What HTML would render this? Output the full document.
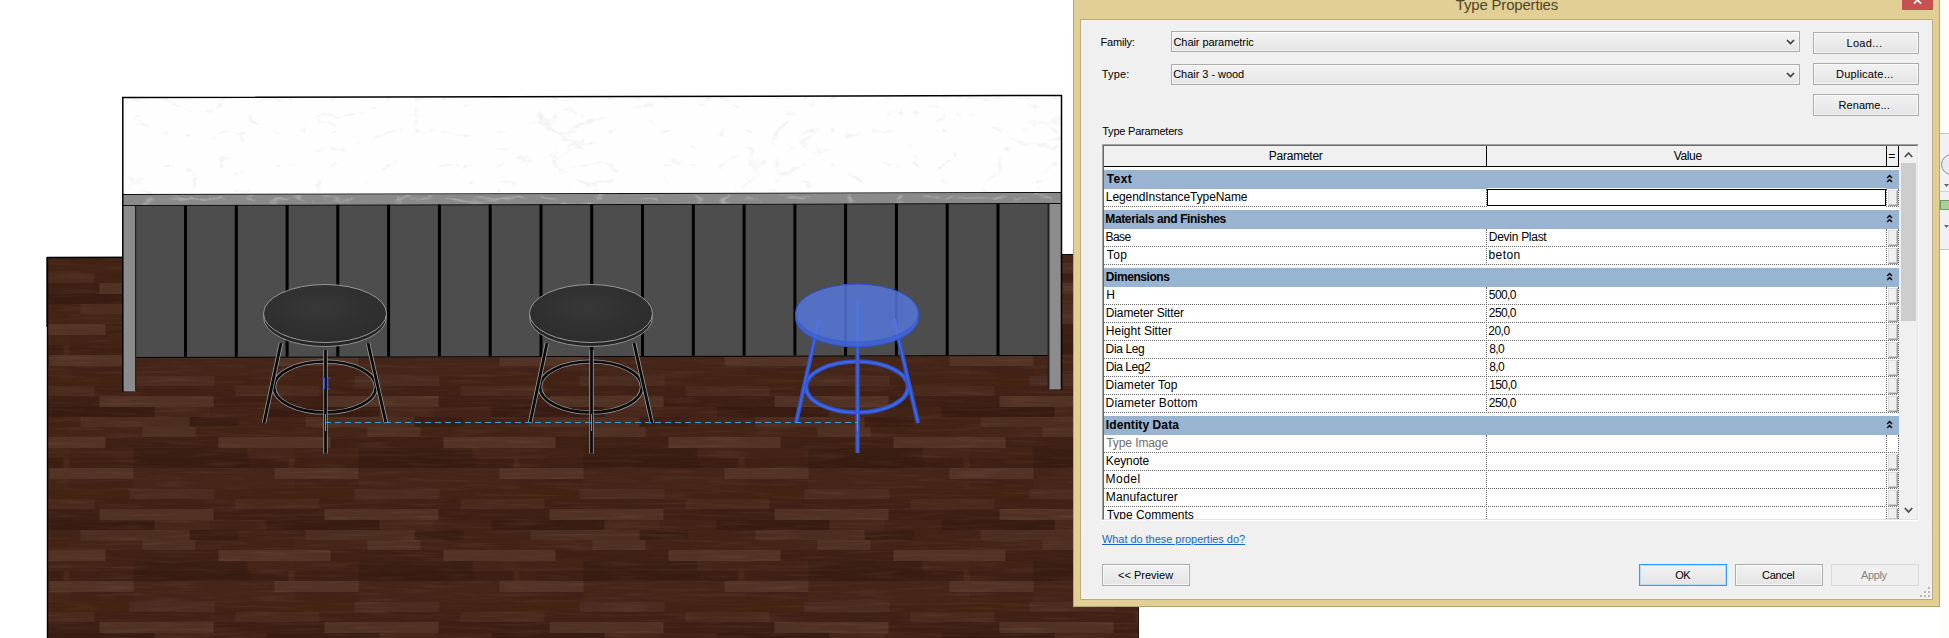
<!DOCTYPE html>
<html><head><meta charset="utf-8"><title>Type Properties</title>
<style>
html,body{margin:0;padding:0;background:#fff;}
body{width:1949px;height:638px;position:relative;overflow:hidden;font-family:"Liberation Sans","DejaVu Sans",sans-serif;}
#scene{position:absolute;left:0;top:0;}
div,span{box-sizing:border-box;}
.a{position:absolute;}
.x{position:absolute;white-space:pre;line-height:20px;}
.cb{position:absolute;height:21px;border:1px solid #acacac;background:linear-gradient(#f3f3f3,#e5e5e5);box-shadow:inset 0 0 0 1px rgba(255,255,255,.55);}
.bt{position:absolute;height:22px;border:1px solid #acacac;background:linear-gradient(#f2f2f2,#e4e4e4);box-shadow:inset 0 0 0 1px rgba(255,255,255,.6);}
.band{position:absolute;left:1104px;width:795px;height:19px;background:#99b4d1;}
.hl{position:absolute;left:1104px;width:795px;height:0;border-top:1px dotted #6a6a6a;}
.sb{position:absolute;left:1888px;width:10px;height:16px;background:#f0f0f0;border:1px solid #9d9d9d;border-top-color:#dcdcdc;border-left-color:#dcdcdc;box-shadow:inset -1px -1px 0 #c8c8c8;}
</style></head><body>

<svg id="scene" width="1949" height="638" viewBox="0 0 1949 638">
<defs><clipPath id="fc"><path d="M48 258 L1138 255 L1138 638 L48 638 Z"/></clipPath>
<filter id="grain" x="0" y="0" width="100%" height="100%"><feTurbulence type="fractalNoise" baseFrequency="0.02 0.35" numOctaves="2" seed="4" result="n"/><feColorMatrix type="matrix" values="0 0 0 0 1  0 0 0 0 0.68  0 0 0 0 0.5  0.9 0 0 0 -0.42"/></filter>
<pattern id="wood" patternUnits="userSpaceOnUse" x="69.5" y="232" width="225" height="113">
<rect x="0" y="0.00" width="64" height="10.32" fill="#3e2014" shape-rendering="crispEdges"/>
<rect x="64" y="0.00" width="116" height="10.32" fill="#381c11" shape-rendering="crispEdges"/>
<rect x="180" y="0.00" width="39" height="10.32" fill="#3c1e13" shape-rendering="crispEdges"/>
<rect x="219" y="0.00" width="6" height="10.32" fill="#46271a" shape-rendering="crispEdges"/>
<rect x="0" y="10.27" width="64" height="10.32" fill="#523326" shape-rendering="crispEdges"/>
<rect x="64" y="10.27" width="141" height="10.32" fill="#452518" shape-rendering="crispEdges"/>
<rect x="205" y="10.27" width="20" height="10.32" fill="#523326" shape-rendering="crispEdges"/>
<rect x="0" y="20.55" width="64" height="10.32" fill="#412216" shape-rendering="crispEdges"/>
<rect x="64" y="20.55" width="161" height="10.32" fill="#452518" shape-rendering="crispEdges"/>
<rect x="0" y="30.82" width="60" height="10.32" fill="#422314" shape-rendering="crispEdges"/>
<rect x="60" y="30.82" width="85" height="10.32" fill="#4a2c21" shape-rendering="crispEdges"/>
<rect x="145" y="30.82" width="80" height="10.32" fill="#422314" shape-rendering="crispEdges"/>
<rect x="0" y="41.09" width="25" height="10.32" fill="#492a1d" shape-rendering="crispEdges"/>
<rect x="25" y="41.09" width="141" height="10.32" fill="#402115" shape-rendering="crispEdges"/>
<rect x="166" y="41.09" width="59" height="10.32" fill="#492a1d" shape-rendering="crispEdges"/>
<rect x="0" y="51.36" width="30" height="10.32" fill="#3d1f14" shape-rendering="crispEdges"/>
<rect x="30" y="51.36" width="114" height="10.32" fill="#503224" shape-rendering="crispEdges"/>
<rect x="144" y="51.36" width="81" height="10.32" fill="#3d1f14" shape-rendering="crispEdges"/>
<rect x="0" y="61.64" width="85" height="10.32" fill="#381c11" shape-rendering="crispEdges"/>
<rect x="85" y="61.64" width="55" height="10.32" fill="#46271a" shape-rendering="crispEdges"/>
<rect x="140" y="61.64" width="57" height="10.32" fill="#422316" shape-rendering="crispEdges"/>
<rect x="197" y="61.64" width="28" height="10.32" fill="#381c11" shape-rendering="crispEdges"/>
<rect x="0" y="71.91" width="11" height="10.32" fill="#422316" shape-rendering="crispEdges"/>
<rect x="11" y="71.91" width="109" height="10.32" fill="#4c2e21" shape-rendering="crispEdges"/>
<rect x="120" y="71.91" width="49" height="10.32" fill="#3b1e12" shape-rendering="crispEdges"/>
<rect x="169" y="71.91" width="56" height="10.32" fill="#422316" shape-rendering="crispEdges"/>
<rect x="0" y="82.18" width="73" height="10.32" fill="#442518" shape-rendering="crispEdges"/>
<rect x="73" y="82.18" width="53" height="10.32" fill="#4f3123" shape-rendering="crispEdges"/>
<rect x="126" y="82.18" width="99" height="10.32" fill="#422316" shape-rendering="crispEdges"/>
<rect x="0" y="92.45" width="36" height="10.32" fill="#523325" shape-rendering="crispEdges"/>
<rect x="36" y="92.45" width="113" height="10.32" fill="#3e2014" shape-rendering="crispEdges"/>
<rect x="149" y="92.45" width="76" height="10.32" fill="#523325" shape-rendering="crispEdges"/>
<rect x="0" y="102.73" width="64" height="10.32" fill="#422316" shape-rendering="crispEdges"/>
<rect x="64" y="102.73" width="114" height="10.32" fill="#3b1e12" shape-rendering="crispEdges"/>
<rect x="178" y="102.73" width="47" height="10.32" fill="#442518" shape-rendering="crispEdges"/>
</pattern></defs>
<g clip-path="url(#fc)">
<rect x="48" y="255" width="1091" height="383" fill="url(#wood)"/>
<rect x="48" y="255" width="1091" height="383" filter="url(#grain)" opacity="0.18"/>
</g>
<path d="M47.5 638 L47.5 257.5 L1138 254.5" fill="none" stroke="#000" stroke-width="1.4"/>
<rect x="46.4" y="257" width="1.2" height="70" fill="#000"/>
<rect x="1138" y="607" width="1" height="31" fill="#2a1510"/>
<g transform="matrix(1,-0.002132,0,1,0,0.2623)">
<rect x="123" y="205" width="939" height="153" fill="#4d4d4d"/>
<rect x="123" y="357" width="939" height="1" fill="#000"/>
<rect x="184.0" y="205" width="3" height="152" fill="#000"/>
<rect x="234.8" y="205" width="3" height="152" fill="#000"/>
<rect x="285.6" y="205" width="3" height="152" fill="#000"/>
<rect x="336.3" y="205" width="3" height="152" fill="#000"/>
<rect x="387.1" y="205" width="3" height="152" fill="#000"/>
<rect x="437.9" y="205" width="3" height="152" fill="#000"/>
<rect x="488.7" y="205" width="3" height="152" fill="#000"/>
<rect x="539.5" y="205" width="3" height="152" fill="#000"/>
<rect x="590.2" y="205" width="3" height="152" fill="#000"/>
<rect x="641.0" y="205" width="3" height="152" fill="#000"/>
<rect x="691.8" y="205" width="3" height="152" fill="#000"/>
<rect x="742.6" y="205" width="3" height="152" fill="#000"/>
<rect x="793.4" y="205" width="3" height="152" fill="#000"/>
<rect x="844.1" y="205" width="3" height="152" fill="#000"/>
<rect x="894.9" y="205" width="3" height="152" fill="#000"/>
<rect x="945.7" y="205" width="3" height="152" fill="#000"/>
<rect x="996.5" y="205" width="3" height="152" fill="#000"/>
<rect x="123" y="205" width="13" height="187" fill="#8c8c8c"/><rect x="135" y="205" width="1.2" height="187" fill="#222"/><rect x="123" y="391" width="13" height="1" fill="#444"/>
<rect x="1049" y="205" width="13" height="187" fill="#8c8c8c"/><rect x="1047.5" y="205" width="2" height="187" fill="#222"/><rect x="1049" y="391" width="13" height="1" fill="#444"/>
<defs><filter id="marble" x="0" y="0" width="100%" height="100%"><feTurbulence type="turbulence" baseFrequency="0.018 0.03" numOctaves="4" seed="11"/><feColorMatrix type="matrix" values="0 0 0 0 0.78  0 0 0 0 0.78  0 0 0 0 0.78  -9 0 0 0 1.25"/></filter><filter id="marble2" x="0" y="0" width="100%" height="100%"><feTurbulence type="turbulence" baseFrequency="0.02 0.05" numOctaves="3" seed="5"/><feColorMatrix type="matrix" values="0 0 0 0 0.72  0 0 0 0 0.72  0 0 0 0 0.72  -8 0 0 0 1.3"/></filter><clipPath id="ct"><path d="M123 97.5 L1061 97.5 L1061 195 L123 195 Z"/></clipPath></defs>
<path d="M123 97.5 L1061 97.5 L1061 195 L123 195 Z" fill="#fefefe"/>
<g clip-path="url(#ct)"><rect x="123" y="95" width="939" height="100" filter="url(#marble)" opacity="0.5"/></g>
<rect x="123" y="195" width="939" height="10" fill="#8a8a8a"/>
<rect x="123" y="195" width="939" height="10" filter="url(#marble2)" opacity="0.35"/>
<rect x="123" y="194" width="939" height="1" fill="#111"/>
<rect x="123" y="205" width="939" height="1" fill="#111"/>
<path d="M122.8 392 L122.8 97.5 L1061.5 97.5 L1061.5 392" fill="none" stroke="#000" stroke-width="1.5"/>
</g>
<defs><radialGradient id="seatg" cx="0.45" cy="0.4" r="0.7"><stop offset="0" stop-color="#373737"/><stop offset="1" stop-color="#2b2b2b"/></radialGradient></defs>
<ellipse cx="325" cy="387" rx="51" ry="25.5" fill="none" stroke="#9a9a9a" stroke-width="4.2"/><ellipse cx="325" cy="387" rx="51" ry="25.5" fill="none" stroke="#0c0c0c" stroke-width="2.6"/><line x1="281" y1="343" x2="264" y2="423" stroke="#9a9a9a" stroke-width="4.4"/><line x1="281" y1="343" x2="264" y2="423" stroke="#0c0c0c" stroke-width="2.8"/><line x1="368" y1="343" x2="386" y2="423" stroke="#9a9a9a" stroke-width="4.4"/><line x1="368" y1="343" x2="386" y2="423" stroke="#0c0c0c" stroke-width="2.8"/><line x1="325.5" y1="350" x2="325.5" y2="453.5" stroke="#9a9a9a" stroke-width="4.4"/><line x1="325.5" y1="350" x2="325.5" y2="453.5" stroke="#0c0c0c" stroke-width="2.8"/><path d="M263.5 313.5 L263.5 317.5 A61.5 29 0 0 0 386.5 317.5 L386.5 313.5 Z" fill="#262626" stroke="#909090" stroke-width="1"/><ellipse cx="325" cy="313.5" rx="61.5" ry="29" fill="url(#seatg)" stroke="#979797" stroke-width="1"/>
<ellipse cx="591" cy="387" rx="51" ry="25.5" fill="none" stroke="#9a9a9a" stroke-width="4.2"/><ellipse cx="591" cy="387" rx="51" ry="25.5" fill="none" stroke="#0c0c0c" stroke-width="2.6"/><line x1="547" y1="343" x2="530" y2="423" stroke="#9a9a9a" stroke-width="4.4"/><line x1="547" y1="343" x2="530" y2="423" stroke="#0c0c0c" stroke-width="2.8"/><line x1="634" y1="343" x2="652" y2="423" stroke="#9a9a9a" stroke-width="4.4"/><line x1="634" y1="343" x2="652" y2="423" stroke="#0c0c0c" stroke-width="2.8"/><line x1="591.5" y1="350" x2="591.5" y2="453.5" stroke="#9a9a9a" stroke-width="4.4"/><line x1="591.5" y1="350" x2="591.5" y2="453.5" stroke="#0c0c0c" stroke-width="2.8"/><path d="M529.5 313.5 L529.5 317.5 A61.5 29 0 0 0 652.5 317.5 L652.5 313.5 Z" fill="#262626" stroke="#909090" stroke-width="1"/><ellipse cx="591" cy="313.5" rx="61.5" ry="29" fill="url(#seatg)" stroke="#979797" stroke-width="1"/>
<ellipse cx="857" cy="387" rx="51" ry="25.5" fill="none" stroke="#2d50c8" stroke-width="4.6"/><ellipse cx="857" cy="387" rx="51" ry="25.5" fill="none" stroke="#4468dc" stroke-width="2"/><line x1="819" y1="319" x2="796" y2="423" stroke="#2d50c8" stroke-width="4.4"/><line x1="819" y1="319" x2="796" y2="423" stroke="#4468dc" stroke-width="1.6"/><line x1="894" y1="319" x2="918" y2="423" stroke="#2d50c8" stroke-width="4.4"/><line x1="894" y1="319" x2="918" y2="423" stroke="#4468dc" stroke-width="1.6"/><line x1="857.5" y1="301" x2="857.5" y2="453" stroke="#2d50c8" stroke-width="4.4"/><line x1="857.5" y1="301" x2="857.5" y2="453" stroke="#4468dc" stroke-width="1.6"/><path d="M795.5 313 A61.5 29 0 0 1 918.5 313 L918.5 318 A61.5 29 0 0 1 795.5 318 Z" fill="#5577dc" fill-opacity="0.84" stroke="#2d50c8" stroke-width="1"/><path d="M795.5 313 A61.5 29 0 0 0 918.5 313 L918.5 318 A61.5 29 0 0 1 795.5 318 Z" fill="#3358cf" fill-opacity="0.55"/><path d="M795.5 313 A61.5 29 0 0 0 918.5 313" fill="none" stroke="#3a5fd4" stroke-width="1"/>
<line x1="325" y1="422.5" x2="857" y2="422.5" stroke="#3aa0d8" stroke-width="1" stroke-dasharray="6 4"/>
<path d="M322 378 h2.5 v11 h-2.5 M330.5 378 h-2.5 v11 h2.5" fill="none" stroke="#2d50c8" stroke-width="1"/>
<line x1="325.5" y1="414" x2="325.5" y2="431" stroke="#3aa0d8" stroke-width="1"/>
<line x1="591.5" y1="414" x2="591.5" y2="431" stroke="#3aa0d8" stroke-width="1"/>
<line x1="857.5" y1="414" x2="857.5" y2="431" stroke="#3aa0d8" stroke-width="1"/>
</svg>
<div class="a" style="left:1940px;top:0;width:9px;height:638px;background:#fdfdfc"></div>
<div class="a" style="left:1940px;top:133px;width:9px;height:117px;background:#f1f1f4;border-top:1px solid #c4c4c8;border-bottom:1px solid #c8c8cc"></div>
<div class="a" style="left:1941px;top:154px;width:21px;height:21px;border:1px solid #8e8e92;border-radius:11px;background:#e9e9ee"></div>
<div class="a" style="left:1940px;top:191px;width:9px;height:1px;background:#d0d0d4"></div>
<div class="a" style="left:1940px;top:200px;width:9px;height:10px;background:#a8cf9c;border:1px solid #6f9f63;border-right:0"></div>
<svg class="a" style="left:1944px;top:184px" width="5" height="4" viewBox="0 0 5 4"><path d="M0 0 L5 0 L2.5 3 Z" fill="#666"/></svg>
<svg class="a" style="left:1944px;top:225px" width="5" height="4" viewBox="0 0 5 4"><path d="M0 0 L5 0 L2.5 3 Z" fill="#666"/></svg>
<div class="a" style="left:1073px;top:-10px;width:867px;height:617px;background:#e1cf96;border:1px solid #b3a574;"></div>
<div class="a" style="left:1902px;top:0px;width:31px;height:10px;background:#c75050;"></div>
<svg class="a" style="left:1902px;top:0" width="31" height="10" viewBox="0 0 31 10"><path d="M11.9 -3.6 L19.1 3.6 M19.1 -3.6 L11.9 3.6" stroke="#fff" stroke-width="1.7" fill="none"/></svg>
<div class="a" style="left:1080px;top:19px;width:853px;height:581px;background:#b9ab7b;"></div>
<div class="a" style="left:1081px;top:20px;width:851px;height:579px;background:#f0f0f0;border:1px solid #f7f5ea;"></div>
<div class="cb" style="left:1171px;top:31px;width:629px"><svg class="a" style="right:4px;top:7px" width="9" height="7" viewBox="0 0 9 7"><path d="M1 1 L4.5 4.6 L8 1" fill="none" stroke="#404040" stroke-width="1.7"/></svg></div>
<div class="cb" style="left:1171px;top:64px;width:629px"><svg class="a" style="right:4px;top:7px" width="9" height="7" viewBox="0 0 9 7"><path d="M1 1 L4.5 4.6 L8 1" fill="none" stroke="#404040" stroke-width="1.7"/></svg></div>
<div class="bt" style="left:1813px;top:32px;width:106px;"></div>
<div class="bt" style="left:1813px;top:63px;width:106px;"></div>
<div class="bt" style="left:1813px;top:94px;width:106px;"></div>
<div class="bt" style="left:1102px;top:564px;width:88px;"></div>
<div class="bt" style="left:1639px;top:564px;width:88px;border-color:#3399ff;box-shadow:inset 0 0 0 1px #b5dcfb;"></div>
<div class="bt" style="left:1735px;top:564px;width:88px;"></div>
<div class="bt" style="left:1831px;top:564px;width:88px;border-color:#d9d9d9;background:#efefef;box-shadow:none;"></div>
<svg class="a" style="left:1920px;top:587px" width="11" height="11" viewBox="0 0 11 11"><g fill="#b8b8b8"><rect x="8" y="8" width="2" height="2"/><rect x="8" y="4" width="2" height="2"/><rect x="4" y="8" width="2" height="2"/><rect x="8" y="0" width="2" height="2"/><rect x="4" y="4" width="2" height="2"/><rect x="0" y="8" width="2" height="2"/></g></svg>
<div class="a" style="left:1102px;top:144px;width:817px;height:377px;background:#fff;border:1px solid #a0a0a0;border-right-color:#fff;border-bottom-color:#fff;"></div>
<div class="a" style="left:1103px;top:145px;width:815px;height:375px;background:#fff;border:1px solid #696969;border-right-color:#e3e3e3;border-bottom-color:#e3e3e3;"></div>
<div class="a" style="left:1104px;top:146px;width:795px;height:20px;background:#f0f0f0;"></div>
<div class="a" style="left:1104px;top:166px;width:795px;height:1px;background:#000;"></div>
<div class="a" style="left:1486px;top:146px;width:1px;height:21px;background:#000;"></div>
<div class="a" style="left:1886px;top:146px;width:1px;height:21px;background:#000;"></div>
<div class="a" style="left:1898px;top:146px;width:1px;height:21px;background:#000;"></div>
<div class="band" style="top:170px"></div>
<svg class="a" style="left:1886px;top:174px" width="8" height="10" viewBox="0 0 8 10"><path d="M1.2 4 L3.6 1.6 L6 4 M1.2 8 L3.6 5.6 L6 8" fill="none" stroke="#000" stroke-width="1.4"/></svg>
<div class="band" style="top:210px"></div>
<svg class="a" style="left:1886px;top:214px" width="8" height="10" viewBox="0 0 8 10"><path d="M1.2 4 L3.6 1.6 L6 4 M1.2 8 L3.6 5.6 L6 8" fill="none" stroke="#000" stroke-width="1.4"/></svg>
<div class="band" style="top:268px"></div>
<svg class="a" style="left:1886px;top:272px" width="8" height="10" viewBox="0 0 8 10"><path d="M1.2 4 L3.6 1.6 L6 4 M1.2 8 L3.6 5.6 L6 8" fill="none" stroke="#000" stroke-width="1.4"/></svg>
<div class="band" style="top:416px"></div>
<svg class="a" style="left:1886px;top:420px" width="8" height="10" viewBox="0 0 8 10"><path d="M1.2 4 L3.6 1.6 L6 4 M1.2 8 L3.6 5.6 L6 8" fill="none" stroke="#000" stroke-width="1.4"/></svg>
<div class="hl" style="top:206px"></div>
<div class="hl" style="top:246px"></div>
<div class="hl" style="top:264px"></div>
<div class="hl" style="top:304px"></div>
<div class="hl" style="top:322px"></div>
<div class="hl" style="top:340px"></div>
<div class="hl" style="top:358px"></div>
<div class="hl" style="top:376px"></div>
<div class="hl" style="top:394px"></div>
<div class="hl" style="top:412px"></div>
<div class="hl" style="top:452px"></div>
<div class="hl" style="top:470px"></div>
<div class="hl" style="top:488px"></div>
<div class="hl" style="top:506px"></div>
<div class="a" style="left:1486px;top:189px;width:0;height:18px;border-left:1px dotted #6a6a6a"></div>
<div class="a" style="left:1886px;top:189px;width:0;height:18px;border-left:1px dotted #6a6a6a"></div>
<div class="a" style="left:1898px;top:189px;width:0;height:18px;border-left:1px dotted #6a6a6a"></div>
<div class="a" style="left:1486px;top:229px;width:0;height:36px;border-left:1px dotted #6a6a6a"></div>
<div class="a" style="left:1886px;top:229px;width:0;height:36px;border-left:1px dotted #6a6a6a"></div>
<div class="a" style="left:1898px;top:229px;width:0;height:36px;border-left:1px dotted #6a6a6a"></div>
<div class="a" style="left:1486px;top:287px;width:0;height:126px;border-left:1px dotted #6a6a6a"></div>
<div class="a" style="left:1886px;top:287px;width:0;height:126px;border-left:1px dotted #6a6a6a"></div>
<div class="a" style="left:1898px;top:287px;width:0;height:126px;border-left:1px dotted #6a6a6a"></div>
<div class="a" style="left:1486px;top:435px;width:0;height:84px;border-left:1px dotted #6a6a6a"></div>
<div class="a" style="left:1886px;top:435px;width:0;height:84px;border-left:1px dotted #6a6a6a"></div>
<div class="a" style="left:1898px;top:435px;width:0;height:84px;border-left:1px dotted #6a6a6a"></div>
<div class="sb" style="top:190px;height:16px"></div>
<div class="sb" style="top:230px;height:16px"></div>
<div class="sb" style="top:248px;height:16px"></div>
<div class="sb" style="top:288px;height:16px"></div>
<div class="sb" style="top:306px;height:16px"></div>
<div class="sb" style="top:324px;height:16px"></div>
<div class="sb" style="top:342px;height:16px"></div>
<div class="sb" style="top:360px;height:16px"></div>
<div class="sb" style="top:378px;height:16px"></div>
<div class="sb" style="top:396px;height:16px"></div>
<div class="sb" style="top:454px;height:16px"></div>
<div class="sb" style="top:472px;height:16px"></div>
<div class="sb" style="top:490px;height:16px"></div>
<div class="sb" style="top:508px;height:12px"></div>
<div class="a" style="left:1487px;top:188px;width:399px;height:19px;background:#fff;"></div>
<div class="a" style="left:1487px;top:189px;width:399px;height:17px;background:#fff;border:1px solid #000;"></div>
<div class="a" style="left:1899px;top:146px;width:18px;height:374px;background:#f0f0f0;"></div>
<div class="a" style="left:1901px;top:163px;width:15px;height:158px;background:#cdcdcd;"></div>
<svg class="a" style="left:1904px;top:151px" width="9" height="7" viewBox="0 0 9 7"><path d="M0.8 6 L4.5 2 L8.2 6" fill="none" stroke="#505050" stroke-width="1.8"/></svg>
<svg class="a" style="left:1904px;top:507px" width="9" height="7" viewBox="0 0 9 7"><path d="M0.8 1 L4.5 5 L8.2 1" fill="none" stroke="#505050" stroke-width="1.8"/></svg>
<div class="a" style="left:1104px;top:519px;width:814px;height:1px;background:#e3e3e3;"></div>
<div class="a" style="left:1102px;top:520px;width:817px;height:1px;background:#fff;"></div>
<div class="a" style="left:1081px;top:521px;width:851px;height:10px;background:#f0f0f0;"></div>
<span class="x" style="left:1455.8px;top:-5.5px;font-size:15px;color:#4f4628;letter-spacing:-0.19px;">Type Properties</span>
<span class="x" style="left:1100.6px;top:32px;font-size:11px;color:#000;letter-spacing:-0.2px;">Family:</span>
<span class="x" style="left:1101.8px;top:64px;font-size:11px;color:#000;letter-spacing:0.18px;">Type:</span>
<span class="x" style="left:1102.2px;top:121px;font-size:11px;color:#000;letter-spacing:-0.21px;">Type Parameters</span>
<span class="x" style="left:1173.5px;top:32px;font-size:11px;color:#000;letter-spacing:-0.07px;">Chair parametric</span>
<span class="x" style="left:1173.2px;top:64px;font-size:11px;color:#000;letter-spacing:-0.04px;">Chair 3 - wood</span>
<span class="x" style="left:1846.5px;top:33px;font-size:11px;color:#000;letter-spacing:0.3px;">Load...</span>
<span class="x" style="left:1836.0px;top:64px;font-size:11px;color:#000;letter-spacing:0.2px;">Duplicate...</span>
<span class="x" style="left:1838.5px;top:95px;font-size:11px;color:#000;letter-spacing:0.07px;">Rename...</span>
<span class="x" style="left:1118.0px;top:565px;font-size:11px;color:#000;letter-spacing:0.01px;">&lt;&lt; Preview</span>
<span class="x" style="left:1675.2px;top:565px;font-size:11px;color:#000;letter-spacing:-0.6px;">OK</span>
<span class="x" style="left:1762.0px;top:565px;font-size:11px;color:#000;letter-spacing:-0.3px;">Cancel</span>
<span class="x" style="left:1861.1px;top:565px;font-size:11px;color:#838383;letter-spacing:-0.4px;">Apply</span>
<span class="x" style="left:1101.9px;top:529px;font-size:11px;color:#1a66c0;letter-spacing:-0.04px;text-decoration:underline;text-underline-offset:1px;">What do these properties do?</span>
<span class="x" style="left:1268.8px;top:146px;font-size:12px;color:#000;letter-spacing:-0.25px;">Parameter</span>
<span class="x" style="left:1673.8px;top:146px;font-size:12px;color:#000;letter-spacing:-0.38px;">Value</span>
<span class="x" style="left:1888.2px;top:146px;font-size:12px;color:#000;letter-spacing:0px;">=</span>
<span class="x" style="left:1106.8px;top:169px;font-size:12px;font-weight:bold;color:#000;letter-spacing:0.37px;">Text</span>
<span class="x" style="left:1105.8px;top:187px;font-size:12px;color:#000;letter-spacing:-0.08px;">LegendInstanceTypeName</span>
<span class="x" style="left:1105.3px;top:209px;font-size:12px;font-weight:bold;color:#000;letter-spacing:-0.37px;">Materials and Finishes</span>
<span class="x" style="left:1105.5px;top:227px;font-size:12px;color:#000;letter-spacing:-0.6px;">Base</span>
<span class="x" style="left:1488.8px;top:227px;font-size:12px;color:#000;letter-spacing:-0.28px;">Devin Plast</span>
<span class="x" style="left:1106.7px;top:245px;font-size:12px;color:#000;letter-spacing:0.5px;">Top</span>
<span class="x" style="left:1488.5px;top:245px;font-size:12px;color:#000;letter-spacing:0.4px;">beton</span>
<span class="x" style="left:1105.8px;top:267px;font-size:12px;font-weight:bold;color:#000;letter-spacing:-0.43px;">Dimensions</span>
<span class="x" style="left:1106.2px;top:285px;font-size:12px;color:#000;letter-spacing:0px;">H</span>
<span class="x" style="left:1488.8px;top:285px;font-size:12px;color:#000;letter-spacing:-0.58px;">500,0</span>
<span class="x" style="left:1105.8px;top:303px;font-size:12px;color:#000;letter-spacing:-0.13px;">Diameter Sitter</span>
<span class="x" style="left:1488.8px;top:303px;font-size:12px;color:#000;letter-spacing:-0.58px;">250,0</span>
<span class="x" style="left:1105.8px;top:321px;font-size:12px;color:#000;letter-spacing:0.01px;">Height Sitter</span>
<span class="x" style="left:1488.2px;top:321px;font-size:12px;color:#000;letter-spacing:-0.47px;">20,0</span>
<span class="x" style="left:1105.6px;top:339px;font-size:12px;color:#000;letter-spacing:-0.38px;">Dia Leg</span>
<span class="x" style="left:1489.2px;top:339px;font-size:12px;color:#000;letter-spacing:-0.6px;">8,0</span>
<span class="x" style="left:1105.7px;top:357px;font-size:12px;color:#000;letter-spacing:-0.44px;">Dia Leg2</span>
<span class="x" style="left:1489.2px;top:357px;font-size:12px;color:#000;letter-spacing:-0.6px;">8,0</span>
<span class="x" style="left:1105.6px;top:375px;font-size:12px;color:#000;letter-spacing:0.07px;">Diameter Top</span>
<span class="x" style="left:1489.2px;top:375px;font-size:12px;color:#000;letter-spacing:-0.6px;">150,0</span>
<span class="x" style="left:1105.6px;top:393px;font-size:12px;color:#000;letter-spacing:0.13px;">Diameter Bottom</span>
<span class="x" style="left:1488.8px;top:393px;font-size:12px;color:#000;letter-spacing:-0.58px;">250,0</span>
<span class="x" style="left:1105.8px;top:415px;font-size:12px;font-weight:bold;color:#000;letter-spacing:0.09px;">Identity Data</span>
<span class="x" style="left:1106.3px;top:433px;font-size:12px;color:#6d6d6d;letter-spacing:-0.1px;">Type Image</span>
<span class="x" style="left:1105.8px;top:451px;font-size:12px;color:#000;letter-spacing:-0.12px;">Keynote</span>
<span class="x" style="left:1105.6px;top:469px;font-size:12px;color:#000;letter-spacing:0.45px;">Model</span>
<span class="x" style="left:1105.8px;top:487px;font-size:12px;color:#000;letter-spacing:0.12px;">Manufacturer</span>
<div class="a" style="left:1104px;top:0;width:400px;height:519px;overflow:hidden"><div class="a" style="left:-1104px;top:0"><span class="x" style="left:1106.7px;top:505px;font-size:12px;color:#000;letter-spacing:-0.02px;">Type Comments</span></div></div>
</body></html>
